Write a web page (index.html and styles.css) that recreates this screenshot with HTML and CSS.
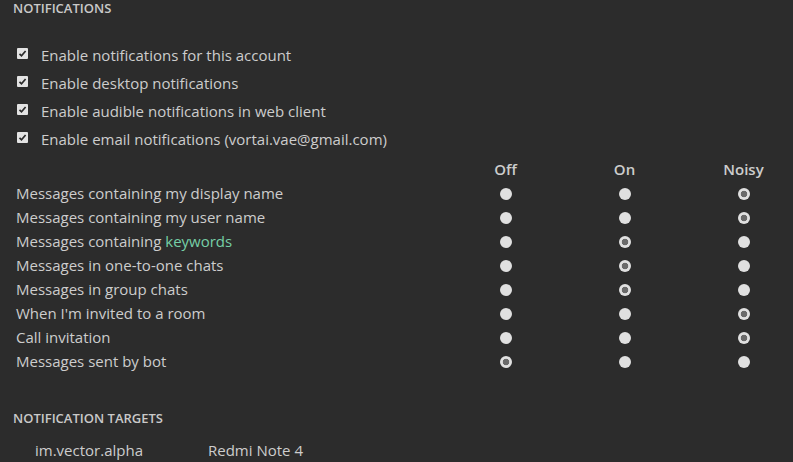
FILE: index.html
```html
<!DOCTYPE html>
<html>
<head>
<meta charset="utf-8">
<link rel="stylesheet" href="styles.css">
</head>
<body>
<div class="page">
  <h3 class="section-title">NOTIFICATIONS</h3>
  <ul class="checks">
    <li class="check-row"><span class="cb"><svg viewBox="0 0 11 11" width="11" height="11"><path d="M2.5 5.8 L4.5 7.8 L8.6 3" fill="none" stroke="#2b2b2b" stroke-width="1.7"/></svg></span><span>Enable notifications for this account</span></li>
    <li class="check-row"><span class="cb"><svg viewBox="0 0 11 11" width="11" height="11"><path d="M2.5 5.8 L4.5 7.8 L8.6 3" fill="none" stroke="#2b2b2b" stroke-width="1.7"/></svg></span><span>Enable desktop notifications</span></li>
    <li class="check-row"><span class="cb"><svg viewBox="0 0 11 11" width="11" height="11"><path d="M2.5 5.8 L4.5 7.8 L8.6 3" fill="none" stroke="#2b2b2b" stroke-width="1.7"/></svg></span><span>Enable audible notifications in web client</span></li>
    <li class="check-row"><span class="cb"><svg viewBox="0 0 11 11" width="11" height="11"><path d="M2.5 5.8 L4.5 7.8 L8.6 3" fill="none" stroke="#2b2b2b" stroke-width="1.7"/></svg></span><span>Enable email notifications (vortai.vae@gmail.com)</span></li>
  </ul>

  <div class="rules">
    <div class="rule head"><span></span><span class="col">Off</span><span class="col">On</span><span class="col last">Noisy</span></div>
    <div class="rule"><span class="label">Messages containing my display name</span><span class="col"><i class="radio"></i></span><span class="col"><i class="radio"></i></span><span class="col last"><i class="radio on"></i></span></div>
    <div class="rule"><span class="label">Messages containing my user name</span><span class="col"><i class="radio"></i></span><span class="col"><i class="radio"></i></span><span class="col last"><i class="radio on"></i></span></div>
    <div class="rule"><span class="label">Messages containing <a class="link">keywords</a></span><span class="col"><i class="radio"></i></span><span class="col"><i class="radio on"></i></span><span class="col last"><i class="radio"></i></span></div>
    <div class="rule"><span class="label">Messages in one-to-one chats</span><span class="col"><i class="radio"></i></span><span class="col"><i class="radio on"></i></span><span class="col last"><i class="radio"></i></span></div>
    <div class="rule"><span class="label">Messages in group chats</span><span class="col"><i class="radio"></i></span><span class="col"><i class="radio on"></i></span><span class="col last"><i class="radio"></i></span></div>
    <div class="rule"><span class="label">When I'm invited to a room</span><span class="col"><i class="radio"></i></span><span class="col"><i class="radio"></i></span><span class="col last"><i class="radio on"></i></span></div>
    <div class="rule"><span class="label">Call invitation</span><span class="col"><i class="radio"></i></span><span class="col"><i class="radio"></i></span><span class="col last"><i class="radio on"></i></span></div>
    <div class="rule"><span class="label">Messages sent by bot</span><span class="col"><i class="radio on"></i></span><span class="col"><i class="radio"></i></span><span class="col last"><i class="radio"></i></span></div>
  </div>

  <h3 class="section-title targets-title">NOTIFICATION TARGETS</h3>
  <div class="target"><span class="t-app">im.vector.alpha</span><span class="t-dev">Redmi Note 4</span></div>
</div>
</body>
</html>
```
FILE: styles.css
```css
html, body {
  margin: 0;
  padding: 0;
  background: #2c2c2c;
  overflow: hidden;
}
body {
  font-family: "Open Sans", "Liberation Sans", sans-serif;
  color: #cdcdcd;
  font-size: 15px;
  width: 793px;
  height: 462px;
}
.page {
  padding-left: 13px;
}
.section-title {
  margin: 0;
  font-size: 13px;
  font-weight: 600;
  color: #c9c9c9;
  line-height: 16px;
}
.checks {
  list-style: none;
  margin: 25px 0 0 0;
  padding: 0 0 0 4px;
}
.check-row {
  display: flex;
  align-items: center;
  height: 28px;
  gap: 13px;
}
.cb {
  width: 11px;
  height: 11px;
  background: #e3e3e3;
  border-radius: 1px;
  display: flex;
  margin-top: -4px;
}
.rules {
  margin-top: 4px;
  padding-left: 3px;
}
.rule {
  display: grid;
  grid-template-columns: 430px 119px 119px 103px;
  height: 24px;
  align-items: center;
}
.rule.head .col {
  font-weight: 600;
}
.col {
  display: flex;
  justify-content: center;
}
.col.last {
  padding-left: 16px;
}
.radio {
  display: block;
  width: 12px;
  height: 12px;
  border-radius: 50%;
  background: #e0e0e0;
  margin-top: 1px;
}
.radio.on {
  background: radial-gradient(circle, #6a6a6a 0 3px, #e0e0e0 3.6px);
}
.link {
  color: #76cfa6;
}
.targets-title {
  margin-top: 37px;
}
.target {
  display: flex;
  margin-top: 14px;
  padding-left: 22px;
  line-height: 20px;
}
.t-app {
  width: 173px;
}
```
